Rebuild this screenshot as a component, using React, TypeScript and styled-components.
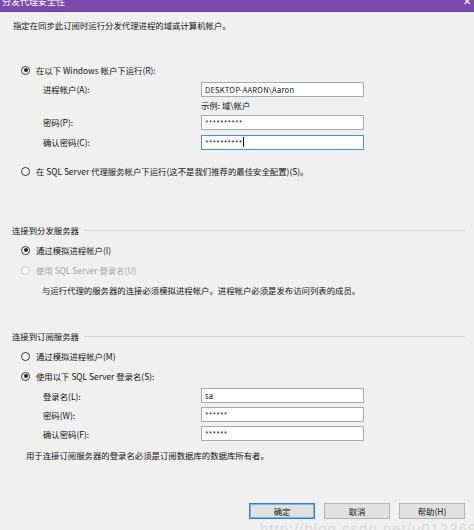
import React from 'react'
import styled, { createGlobalStyle } from 'styled-components'

const GlobalStyle = createGlobalStyle`
  html, body {
    margin: 0;
    padding: 0;
    background: #f0f0f0;
  }
  body {
    font-family: "Noto Sans CJK SC", "Noto Sans", sans-serif;
    color: #111;
  }
`

const Dialog = styled.div`
  position: relative;
  width: 474px;
  height: 530px;
  overflow: hidden;
  background: #f0f0f0;
  font-size: 8.4px;
`

const TitleBar = styled.div`
  display: flex;
  align-items: flex-end;
  justify-content: space-between;
  height: 12px;
  padding: 0 3px 0 2px;
  background: #7b4aae;
  border-bottom: 1px solid #6c3ea0;
  box-sizing: border-box;
  overflow: hidden;
  color: #fff;
`

const TitleText = styled.span`
  font-size: 9px;
  line-height: 9px;
  margin-bottom: 5px;
`

const CloseGlyph = styled.span`
  font-size: 10px;
  line-height: 10px;
  margin-bottom: 5px;
`

const Body = styled.div`
  display: flex;
  flex-direction: column;
  padding: 0 9px 0 13px;
`

const Line = styled.div<{ $top?: number; $indent?: number; $h?: number }>`
  display: flex;
  align-items: center;
  height: ${p => p.$h ?? 20}px;
  margin-top: ${p => p.$top ?? 0}px;
  padding-left: ${p => p.$indent ?? 0}px;
  white-space: nowrap;
`

const RadioRow = styled(Line)<{ $disabled?: boolean }>`
  gap: 6px;
  padding-left: 8px;
  color: ${p => (p.$disabled ? '#a3a3a3' : 'inherit')};
`

const RadioDot = styled.span<{ $checked?: boolean; $disabled?: boolean }>`
  position: relative;
  width: 9px;
  height: 9px;
  flex: none;
  border-radius: 50%;
  box-sizing: border-box;
  background: #fff;
  border: 1px solid ${p => (p.$disabled ? '#c6c6c6' : '#333')};

  &::after {
    content: '';
    display: ${p => (p.$checked ? 'block' : 'none')};
    position: absolute;
    left: 1.5px;
    top: 1.5px;
    width: 4px;
    height: 4px;
    border-radius: 50%;
    background: #222;
  }
`

const FieldRow = styled(Line)`
  padding-left: 30px;
`

const Label = styled.span`
  width: 158px;
  flex: none;
`

const TextBox = styled.div<{ $focused?: boolean }>`
  display: flex;
  align-items: center;
  width: 163px;
  height: 15px;
  box-sizing: border-box;
  padding-left: 3px;
  background: #fff;
  border: 1px solid ${p => (p.$focused ? '#4a90d6' : '#a9a9a9')};
  font-size: 7.6px;
  letter-spacing: 0.2px;
`

const Caret = styled.span`
  width: 1px;
  height: 10px;
  margin-left: 1px;
  background: #000;
`

const SectionHeader = styled.div<{ $top: number }>`
  display: flex;
  align-items: center;
  gap: 5px;
  height: 16px;
  margin-top: ${p => p.$top}px;
  margin-left: -1px;
  white-space: nowrap;

  &::after {
    content: '';
    flex: 1;
    height: 1px;
    background: #d6d6d6;
  }
`

const ButtonBar = styled.div`
  display: flex;
  justify-content: flex-end;
  gap: 9px;
  margin-top: 40px;
`

const Button = styled.div<{ $default?: boolean }>`
  display: flex;
  align-items: center;
  justify-content: center;
  width: 66px;
  height: 16px;
  box-sizing: border-box;
  background: #e1e1e1;
  border: 1px solid ${p => (p.$default ? '#2c7cd0' : '#b4b4b4')};
  box-shadow: ${p => (p.$default ? 'inset 0 0 0 1px #7fb1e6' : 'none')};
`

const Watermark = styled.div`
  position: absolute;
  left: 260px;
  top: 520px;
  font-family: "Liberation Sans", sans-serif;
  font-size: 15px;
  letter-spacing: 1px;
  color: rgba(185, 185, 185, 0.45);
  white-space: nowrap;
`

const Radio = ({ checked, disabled, top, children }: { checked?: boolean; disabled?: boolean; top?: number; children: React.ReactNode }) => (
  <RadioRow $top={top} $disabled={disabled}>
    <RadioDot $checked={checked} $disabled={disabled} />
    <span>{children}</span>
  </RadioRow>
)

const Field = ({ label, value, focused, h }: { label: string; value: string; focused?: boolean; h?: number }) => (
  <FieldRow $h={h}>
    <Label>{label}</Label>
    <TextBox $focused={focused}>
      {value}
      {focused && <Caret />}
    </TextBox>
  </FieldRow>
)

const App = () => {
  return (
    <Dialog>
      <GlobalStyle />
      <TitleBar>
        <TitleText>分发代理安全性</TitleText>
        <CloseGlyph>✕</CloseGlyph>
      </TitleBar>
      <Body>
        <Line $top={6} $h={14}>指定在同步此订阅时运行分发代理进程的域或计算机帐户。</Line>

        <Radio checked top={28}>在以下 Windows 帐户下运行(R):</Radio>
        <Field label="进程帐户(A):" value="DESKTOP-AARON\Aaron" h={18} />
        <Line $indent={188} $h={14}>示例: 域\帐户</Line>
        <Field label="密码(P):" value="**********" />
        <Field label="确认密码(C):" value="**********" focused />

        <Radio top={9}>在 SQL Server 代理服务帐户下运行(这不是我们推荐的最佳安全配置)(S)。</Radio>

        <SectionHeader $top={41}>连接到分发服务器</SectionHeader>
        <Radio checked top={2}>通过模拟进程帐户(I)</Radio>
        <Radio disabled>使用 SQL Server 登录名(U)</Radio>
        <Line $indent={29}>与运行代理的服务器的连接必须模拟进程帐户。进程帐户必须是发布访问列表的成员。</Line>

        <SectionHeader $top={28}>连接到订阅服务器</SectionHeader>
        <Radio top={2}>通过模拟进程帐户(M)</Radio>
        <Radio checked>使用以下 SQL Server 登录名(S):</Radio>
        <Field label="登录名(L):" value="sa" h={19} />
        <Field label="密码(W):" value="******" h={19} />
        <Field label="确认密码(F):" value="******" h={19} />
        <Line $top={4} $h={16} $indent={13}>用于连接订阅服务器的登录名必须是订阅数据库的数据库所有者。</Line>

        <ButtonBar>
          <Button $default>确定</Button>
          <Button>取消</Button>
          <Button>帮助(H)</Button>
        </ButtonBar>
      </Body>
      <Watermark>http://blog.csdn.net/u012369570</Watermark>
    </Dialog>
  )
}

export default App
